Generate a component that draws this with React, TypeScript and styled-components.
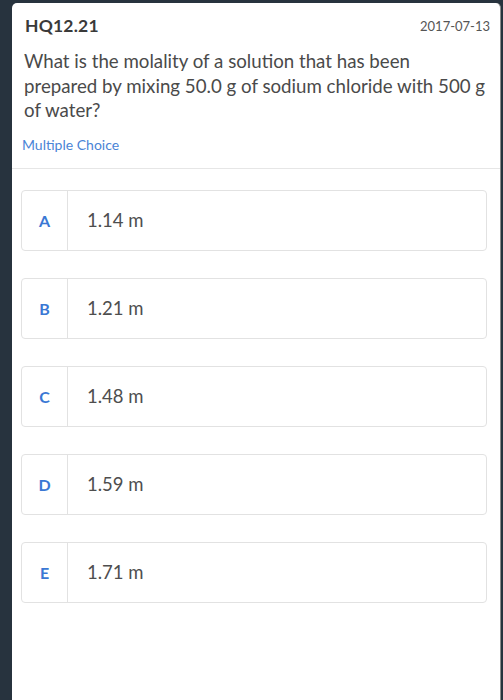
import React from "react";
import styled, { createGlobalStyle } from "styled-components";

const Global = createGlobalStyle`
  html, body { margin: 0; padding: 0; background: #27333e; }
  body { font-family: Lato, "Open Sans", sans-serif; }
`;

const Screen = styled.div`
  height: 700px;
  padding: 3px 2px 0 12px;
  box-sizing: border-box;
  display: flex;
  overflow: hidden;
`;

const Panel = styled.div`
  flex: 1;
  background: #ffffff;
  border-radius: 5px 5px 0 0;
  border-right: 1px solid #8a8a8a;
  display: flex;
  flex-direction: column;
`;

const Header = styled.div`
  display: flex;
  justify-content: space-between;
  align-items: flex-start;
  padding: 12px 10px 0 13px;
`;

const Title = styled.h1`
  margin: 0;
  font-family: Lato, sans-serif;
  font-weight: 700;
  font-size: 17.5px;
  color: #3a3a3a;
  letter-spacing: 0.2px;
`;

const DateText = styled.span`
  font-family: Lato, sans-serif;
  font-size: 13px;
  color: #555555;
  margin-top: 3px;
`;

const Question = styled.p`
  margin: 13px 4px 0 12px;
  font-family: Lato, sans-serif;
  font-size: 18.7px;
  line-height: 24.5px;
  color: #4a4a4a;
`;

const Kind = styled.div`
  margin-top: 13px;
  padding: 0 0 15px 10px;
  font-family: Lato, sans-serif;
  font-size: 14px;
  color: #4a84d6;
  border-bottom: 1px solid #e6e6e6;
`;

const Options = styled.div`
  display: flex;
  flex-direction: column;
  gap: 27px;
  padding: 21px 13px 0 9px;
`;

const Option = styled.div`
  display: flex;
  height: 61px;
  border: 1px solid #e2e2e2;
  border-radius: 4px;
  box-sizing: border-box;
`;

const Letter = styled.div`
  width: 45px;
  flex: none;
  border-right: 1px solid #e2e2e2;
  display: flex;
  align-items: center;
  justify-content: center;
  font-family: Lato, sans-serif;
  font-weight: 700;
  font-size: 16px;
  color: #3a78d4;
`;

const Value = styled.div`
  display: flex;
  align-items: center;
  padding-left: 19px;
  font-family: Lato, sans-serif;
  font-size: 18.5px;
  color: #4e4e4e;
`;

const options = [
  ["A", "1.14 m"],
  ["B", "1.21 m"],
  ["C", "1.48 m"],
  ["D", "1.59 m"],
  ["E", "1.71 m"],
];

export default function App() {
  return (
    <>
      <Global />
      <Screen>
        <Panel>
          <Header>
            <Title>HQ12.21</Title>
            <DateText>2017-07-13</DateText>
          </Header>
          <Question>
            What is the molality of a solution that has been
            <br />
            prepared by mixing 50.0 g of sodium chloride with 500 g
            <br />
            of water?
          </Question>
          <Kind>Multiple Choice</Kind>
          <Options>
            {options.map(([l, v]) => (
              <Option key={l}>
                <Letter>{l}</Letter>
                <Value>{v}</Value>
              </Option>
            ))}
          </Options>
        </Panel>
      </Screen>
    </>
  );
}
